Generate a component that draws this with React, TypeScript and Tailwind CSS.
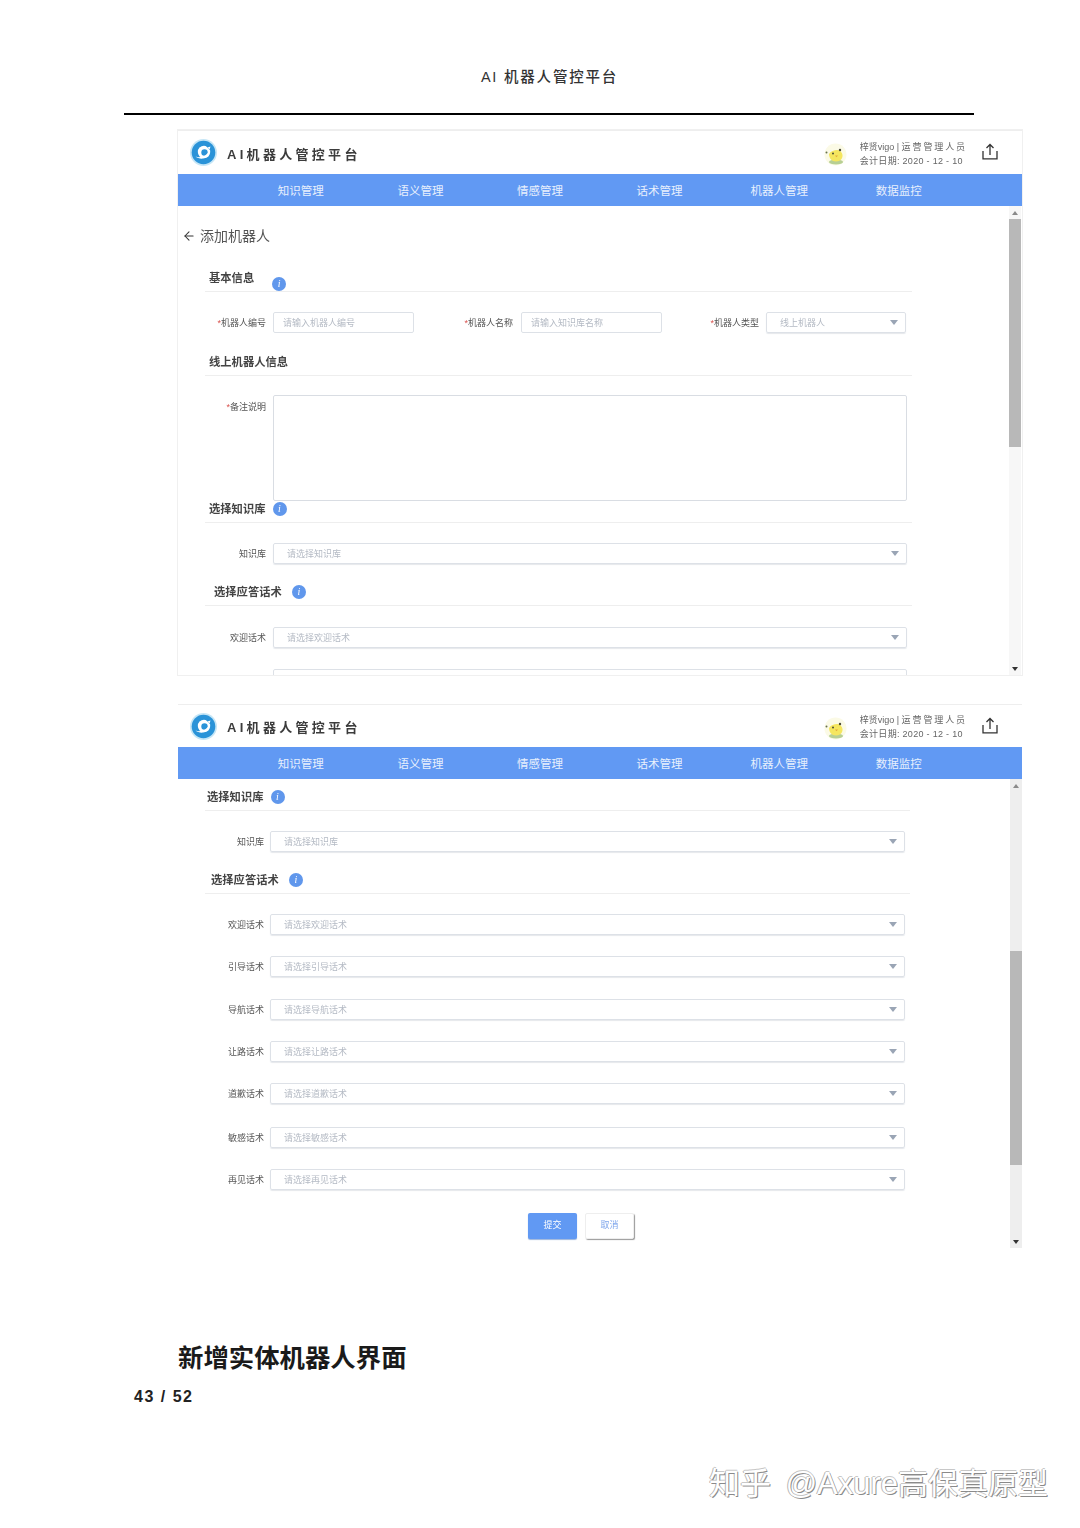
import type { ReactNode } from 'react';
import { ArrowLeft } from 'lucide-react';

const NAV_ITEMS = ['知识管理', '语义管理', '情感管理', '话术管理', '机器人管理', '数据监控'];

function Logo() {
  return (
    <svg width="27" height="27" viewBox="0 0 27 27" className="shrink-0">
      <circle cx="13.5" cy="13.5" r="13.5" fill="#c6e6f6" />
      <circle cx="13.5" cy="13.5" r="11.8" fill="#2a93d8" />
      <circle cx="14" cy="13" r="6.2" fill="#ffffff" />
      <circle cx="14.5" cy="13.5" r="3.2" fill="#2a93d8" />
      <path d="M5.500 17.500c2.500 1 6 .8 8.500-.5 2.500-1.300 4-3 5-5 .3 2.500-.6 5-3 6.500-3 1.800-7.500 1.500-10.500-1z" fill="#ffffff" />
      <path d="M16 7l5.500-1.500-1.500 5.500z" fill="#2a93d8" />
      <path d="M17.500 8.500l3-1-1 3z" fill="#ffffff" />
    </svg>
  );
}

function Chick() {
  return (
    <svg width="23" height="23" viewBox="0 0 23 23" className="shrink-0">
      <circle cx="11.500" cy="11.500" r="11" fill="#fbfae6" />
      <ellipse cx="12" cy="19" rx="7" ry="2.500" fill="#b7cf94" />
      <path d="M5 11c2-3 5-4 8-4 3 0 5 2 5.500 5 .4 3-2 6.500-6.500 6.500S5 15 5 11z" fill="#f5e65f" />
      <circle cx="2.500" cy="9.500" r="1" fill="#66704c" />
      <circle cx="9" cy="10.500" r="1" fill="#4c4c38" />
      <circle cx="16" cy="7" r="1.200" fill="#4c4c38" />
      <path d="M11 12.500h3l-1.500 1.800z" fill="#e3a83c" />
    </svg>
  );
}

function UploadIcon() {
  return (
    <svg width="16" height="17" viewBox="0 0 16 17" fill="none" stroke="#333333" strokeWidth="1.300" className="shrink-0">
      <path d="M8 12V1.500M4.500 5 8 1.500 11.500 5" />
      <path d="M1 8v7.800h14V8" />
    </svg>
  );
}

function InfoDot({ className = '' }: { className?: string }) {
  return (
    <span className={`flex h-[14px] w-[14px] shrink-0 items-center justify-center rounded-full bg-[#6097ec] font-['Liberation_Serif',serif] text-[10px] italic leading-none text-white ${className}`}>
      i
    </span>
  );
}

function Caret() {
  return <span className="h-0 w-0 border-x-[4px] border-t-[5px] border-x-transparent border-t-[#9aa5b5]" />;
}

function Header({ heightClass, titleClass }: { heightClass: string; titleClass: string }) {
  return (
    <>
      <div className={`flex items-center border-t border-[#eeeeee] pl-[12px] pr-[24px] ${heightClass}`}>
        <Logo />
        <span className={`ml-[10px] whitespace-nowrap text-[13px] font-bold tracking-[3.300px] text-[#3c3c3c] ${titleClass}`}>AI机器人管控平台</span>
        <div className="ml-auto mt-[4px]"><Chick /></div>
        <div className="ml-[13px] mt-[2px] text-[9px] leading-[14px] text-[#666666]">
          <div className="tracking-[1.900px]"><span className="tracking-normal">梓贤vigo | </span>运营管理人员</div>
          <div className="tracking-[0.300px]">会计日期: 2020 - 12 - 10</div>
        </div>
        <div className="ml-[15px] mt-[-2px]"><UploadIcon /></div>
      </div>
      <nav className="flex h-[32px] items-center bg-[#6199f3] pl-[63px] pt-[3px]">
        {NAV_ITEMS.map((item) => (
          <div key={item} className="w-[119.600px] text-center text-[11.500px] text-[#e8f0fd]">{item}</div>
        ))}
      </nav>
    </>
  );
}

function Scrollbar({ thumbClass, trackClass }: { thumbClass: string; trackClass: string }) {
  return (
    <div className={`flex w-[12px] shrink-0 flex-col ${trackClass}`}>
      <div className="flex h-[13px] items-center justify-center">
        <span className="h-0 w-0 border-x-[3px] border-b-[4px] border-x-transparent border-b-[#8a8a8a]" />
      </div>
      <div className="min-h-0 flex-1">
        <div className={`bg-[#b8b8b8] ${thumbClass}`} />
      </div>
      <div className="flex h-[13px] items-center justify-center">
        <span className="h-0 w-0 border-x-[3px] border-t-[4px] border-x-transparent border-t-[#333333]" />
      </div>
    </div>
  );
}

function SectionTitle({ children, className, textClass, iconClass }: { children: ReactNode; className: string; textClass: string; iconClass: string }) {
  return (
    <div className={`ml-[27px] flex h-[26px] shrink-0 items-start border-b border-[#eeeeee] ${className}`}>
      <span className={`text-[11.300px] font-bold leading-[25px] text-[#444444] ${textClass}`}>{children}</span>
      <InfoDot className={iconClass} />
    </div>
  );
}

function Label({ children, required, className }: { children: ReactNode; required?: boolean; className: string }) {
  return (
    <span className={`shrink-0 pt-[2px] text-right text-[9px] text-[#555555] ${className}`}>
      {required && <span className="text-[#d9534f]">*</span>}
      {children}
    </span>
  );
}

function InputBox({ placeholder, className }: { placeholder: string; className: string }) {
  return (
    <div className={`flex h-[21px] items-center rounded-[2px] border border-[#dde1e7] pl-[9px] pt-[2px] text-[9px] text-[#b4bac4] ${className}`}>
      {placeholder}
    </div>
  );
}

function SelectBox({ placeholder, className }: { placeholder: string; className: string }) {
  return (
    <div className={`flex h-[21px] items-center justify-between rounded-[2px] border border-[#dde1e7] pl-[13px] pr-[7px] text-[9px] text-[#b4bac4] shadow-[0_1px_1px_#e6e8ec] ${className}`}>
      <span className="pt-[2px]">{placeholder}</span>
      <Caret />
    </div>
  );
}

function SelectRow({ label, placeholder, className, labelClass, boxClass }: { label: string; placeholder: string; className: string; labelClass: string; boxClass: string }) {
  return (
    <div className={`flex shrink-0 items-center ${className}`}>
      <Label className={labelClass}>{label}</Label>
      <SelectBox placeholder={placeholder} className={boxClass} />
    </div>
  );
}

const LOWER_ROWS = [
  { label: '欢迎话术', placeholder: '请选择欢迎话术', gap: 'mt-[20px]' },
  { label: '引导话术', placeholder: '请选择引导话术', gap: 'mt-[21px]' },
  { label: '导航话术', placeholder: '请选择导航话术', gap: 'mt-[22px]' },
  { label: '让路话术', placeholder: '请选择让路话术', gap: 'mt-[21px]' },
  { label: '道歉话术', placeholder: '请选择道歉话术', gap: 'mt-[21px]' },
  { label: '敏感话术', placeholder: '请选择敏感话术', gap: 'mt-[23px]' },
  { label: '再见话术', placeholder: '请选择再见话术', gap: 'mt-[21px]' },
];

export default function App() {
  return (
    <div className="relative h-[1528px] w-[1080px] overflow-hidden bg-white font-['Liberation_Sans','Noto_Sans_CJK_SC',sans-serif]">
      <div className="pl-[19px] pt-[67px] text-center text-[14.500px] font-medium leading-[20px] tracking-[1.800px] text-[#333333]">AI 机器人管控平台</div>
      <div className="ml-[124px] mt-[26px] h-[2px] w-[850px] bg-black" />

      {/* first capture */}
      <section className="ml-[178px] mt-[15px] flex h-[545px] w-[844px] flex-col shadow-[0_0_0_1px_#f0f0f0] blur-[0.5px]">
        <Header heightClass="h-[44px]" titleClass="mt-[4px]" />
        <div className="flex min-h-0 flex-1">
          <div className="flex min-w-0 flex-1 flex-col overflow-hidden">
            <div className="ml-[4px] mt-[20px] flex h-[20px] items-center text-[14px] text-[#555555]">
              <ArrowLeft size={14} strokeWidth={1.800} className="mr-[4px] text-[#333333]" />添加机器人
            </div>
            <SectionTitle className="mt-[20px] w-[707px]" textClass="pl-[4px]" iconClass="ml-[18px] mt-[11px]">基本信息</SectionTitle>
            <div className="mt-[20px] flex shrink-0 items-center">
              <Label required className="w-[88px]">机器人编号</Label>
              <InputBox placeholder="请输入机器人编号" className="ml-[7px] w-[141px]" />
              <Label required className="ml-[49px] w-[50px]">机器人名称</Label>
              <InputBox placeholder="请输入知识库名称" className="ml-[8px] w-[141px]" />
              <Label required className="ml-[47px] w-[50px]">机器人类型</Label>
              <SelectBox placeholder="线上机器人" className="ml-[7px] w-[140px]" />
            </div>
            <SectionTitle className="mt-[17px] w-[707px]" textClass="pl-[4px]" iconClass="hidden">线上机器人信息</SectionTitle>
            <div className="mt-[19px] flex shrink-0 items-start">
              <Label required className="mt-[4px] w-[88px]">备注说明</Label>
              <div className="ml-[7px] h-[106px] w-[634px] rounded-[2px] border border-[#d9dde3]" />
            </div>
            <SectionTitle className="mt-[-4px] w-[707px]" textClass="pl-[4px]" iconClass="ml-[7px] mt-[5px]">选择知识库</SectionTitle>
            <SelectRow label="知识库" placeholder="请选择知识库" className="mt-[20px]" labelClass="w-[88px]" boxClass="ml-[7px] w-[634px]" />
            <SectionTitle className="mt-[16px] w-[707px]" textClass="pl-[9px]" iconClass="ml-[10px] mt-[5px]">选择应答话术</SectionTitle>
            <SelectRow label="欢迎话术" placeholder="请选择欢迎话术" className="mt-[21px]" labelClass="w-[88px]" boxClass="ml-[7px] w-[634px]" />
            <div className="ml-[95px] mt-[21px] h-[21px] w-[634px] shrink-0 rounded-[2px] border border-[#dde1e7]" />
          </div>
          <Scrollbar thumbClass="h-[228px]" trackClass="mr-[1px] bg-[#f7f7f7]" />
        </div>
      </section>

      {/* second capture, scrolled down */}
      <section className="ml-[178px] mt-[29px] flex h-[544px] w-[844px] flex-col blur-[0.5px]">
        <Header heightClass="h-[43px]" titleClass="mt-[3px]" />
        <div className="flex min-h-0 flex-1">
          <div className="flex min-w-0 flex-1 flex-col overflow-hidden">
            <SectionTitle className="mt-[6px] w-[705px]" textClass="pl-[2px]" iconClass="ml-[7px] mt-[5px]">选择知识库</SectionTitle>
            <SelectRow label="知识库" placeholder="请选择知识库" className="mt-[20px]" labelClass="w-[86px]" boxClass="ml-[6px] w-[635px]" />
            <SectionTitle className="mt-[16px] w-[705px]" textClass="pl-[6px]" iconClass="ml-[10px] mt-[5px]">选择应答话术</SectionTitle>
            {LOWER_ROWS.map((row) => (
              <SelectRow key={row.label} label={row.label} placeholder={row.placeholder} className={row.gap} labelClass="w-[86px]" boxClass="ml-[6px] w-[635px]" />
            ))}
            <div className="ml-[350px] mt-[23px] flex shrink-0 gap-[8px]">
              <button className="h-[26px] w-[49px] rounded-[2px] bg-[#6199f3] text-[9px] text-white shadow-[0_1px_1px_#9db5dc]">提交</button>
              <button className="h-[26px] w-[49px] rounded-[2px] border border-[#eeeeee] bg-white text-[9px] text-[#7fa6ec] shadow-[1px_1px_1px_#999999]">取消</button>
            </div>
          </div>
          <Scrollbar thumbClass="mt-[159px] h-[214px]" trackClass="bg-[#eeeeee]" />
        </div>
      </section>

      <h2 className="ml-[178px] mt-[94px] text-[25.400px] font-bold leading-[32px] text-[#1a1a1a]">新增实体机器人界面</h2>
      <div className="ml-[134px] mt-[13px] text-[16px] font-bold leading-[20px] tracking-[1.500px] text-[#222222]">43 / 52</div>

      {/* zhihu watermark sits on top of the page */}
      <div className="absolute left-[709px] top-[1464px] whitespace-nowrap text-[31px] leading-[40px] text-white [text-shadow:1px_1px_0_#8a8a8a,-1px_0_0_#b5b5b5,0_-1px_0_#c8c8c8]">
        知乎 <span className="ml-[6px]">@Axure</span><span className="text-[30px]">高保真原型</span>
      </div>
    </div>
  );
}
